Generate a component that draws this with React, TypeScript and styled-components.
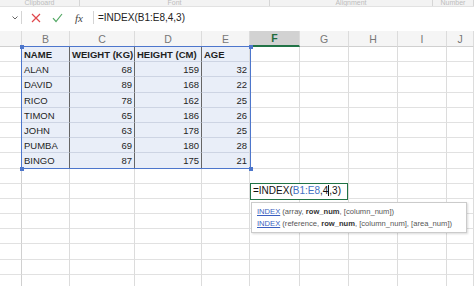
import React from "react";
import styled, { createGlobalStyle } from "styled-components";

const GlobalStyle = createGlobalStyle`
  html, body { margin: 0; padding: 0; background: #ffffff; }
  body {
    width: 474px;
    height: 286px;
    overflow: hidden;
    font-family: "Liberation Sans", Arial, sans-serif;
  }
`;

const COLS = ["B", "C", "D", "E", "F", "G", "H", "I", "J"];
const COL_W = [22, 48, 65, 67, 48, 50, 49, 49, 49];
const ROW_H = 15.2;
const HEAD_H = 16;

const data = [
  ["NAME", "WEIGHT (KG)", "HEIGHT (CM)", "AGE"],
  ["ALAN", "68", "159", "32"],
  ["DAVID", "89", "168", "22"],
  ["RICO", "78", "162", "25"],
  ["TIMON", "65", "186", "26"],
  ["JOHN", "63", "178", "25"],
  ["PUMBA", "69", "180", "28"],
  ["BINGO", "87", "175", "21"],
];

const Page = styled.div`
  width: 474px;
  height: 286px;
  overflow: hidden;
  display: flex;
  flex-direction: column;
`;

const Ribbon = styled.div`
  height: 7px;
  flex-shrink: 0;
  display: flex;
  background: #f3f3f3;
  border-bottom: 1px solid #e2e2e2;
  box-sizing: border-box;
  overflow: hidden;
`;

const RibbonGroup = styled.div<{ $w: number }>`
  width: ${(p) => p.$w}px;
  flex-shrink: 0;
  border-right: 1px solid #d6d6d6;
  display: flex;
  justify-content: center;
  align-items: flex-end;
  font-size: 7px;
  line-height: 7px;
  color: #bdbdbd;
  box-sizing: border-box;
  margin-top: -3px;
`;

const FormulaBar = styled.div`
  height: 21px;
  flex-shrink: 0;
  display: flex;
  align-items: center;
  background: #ffffff;
`;

const NameBox = styled.div`
  width: 22px;
  height: 13px;
  display: flex;
  align-items: center;
  justify-content: flex-end;
  padding-right: 3px;
  box-sizing: border-box;
  border-right: 1px solid #d4d4d4;
`;

const IconSlot = styled.div<{ $w: number }>`
  width: ${(p) => p.$w}px;
  display: flex;
  justify-content: center;
  align-items: center;
`;

const Fx = styled.span`
  font-family: "Liberation Serif", "Times New Roman", serif;
  font-style: italic;
  font-size: 11px;
  color: #444;
`;

const FormulaText = styled.div`
  flex: 1;
  height: 13px;
  border-left: 1px solid #d4d4d4;
  padding-left: 4px;
  font-size: 10px;
  line-height: 13px;
  color: #222;
`;

const Gap = styled.div`
  height: 3px;
  flex-shrink: 0;
  background: #ffffff;
`;

const Sheet = styled.div`
  position: relative;
  display: grid;
  grid-template-columns: ${COL_W.map((w) => w + "px").join(" ")} 1fr;
  grid-template-rows: ${HEAD_H}px;
  grid-auto-rows: ${ROW_H}px;
`;

const ColHead = styled.div<{ $active?: boolean }>`
  display: flex;
  align-items: center;
  justify-content: center;
  background: ${(p) => (p.$active ? "#d2d2d2" : "#f5f5f5")};
  border-right: 1px solid #dcdcdc;
  border-bottom: ${(p) => (p.$active ? "2px solid #217346" : "1px solid #d0d0d0")};
  box-sizing: border-box;
  font-size: 10.5px;
  color: ${(p) => (p.$active ? "#1e6b3c" : "#777777")};
  font-weight: ${(p) => (p.$active ? "bold" : "normal")};
`;

const RowHead = styled.div`
  background: #ffffff;
  border-right: 1px solid #d0d0d0;
  border-bottom: 1px solid #e1e1e1;
  box-sizing: border-box;
`;

const Cell = styled.div<{ $fill?: boolean; $right?: boolean; $bold?: boolean; $dark?: boolean }>`
  background: ${(p) => (p.$fill ? "#e9eef8" : "#ffffff")};
  border-right: 1px solid ${(p) => (p.$dark ? "#666666" : "#dcdcdc")};
  border-bottom: 1px solid ${(p) => (p.$fill ? "#cdd4e3" : "#e1e1e1")};
  box-sizing: border-box;
  padding: 0 2px;
  font-size: 9.5px;
  line-height: 15px;
  color: #1f1f1f;
  font-weight: ${(p) => (p.$bold ? "bold" : "normal")};
  text-align: ${(p) => (p.$right ? "right" : "left")};
  white-space: nowrap;
  overflow: hidden;
`;

const RangeBox = styled.div`
  position: absolute;
  left: 21px;
  top: ${HEAD_H - 1}px;
  width: 230px;
  height: ${8 * ROW_H + 1.5}px;
  border: 1.5px solid #4d76cc;
  box-sizing: border-box;
  pointer-events: none;
`;

const Handle = styled.div<{ $x: "l" | "r"; $y: "t" | "b" }>`
  position: absolute;
  width: 4px;
  height: 4px;
  background: #4d76cc;
  ${(p) => (p.$x === "l" ? "left: -2.5px;" : "right: -2.5px;")}
  ${(p) => (p.$y === "t" ? "top: -2.5px;" : "bottom: -2.5px;")}
`;

const Editor = styled.div`
  position: absolute;
  left: 250px;
  top: ${HEAD_H + 9 * ROW_H - 0.5}px;
  width: 98px;
  height: 16.5px;
  border: 1.5px solid #217346;
  box-sizing: border-box;
  background: #ffffff;
  padding-left: 2px;
  font-size: 10px;
  line-height: 13.5px;
  color: #111;
  white-space: nowrap;
`;

const RefText = styled.span`
  color: #4472c4;
`;

const Caret = styled.span`
  display: inline-block;
  width: 1px;
  height: 11px;
  background: #111;
  vertical-align: -2px;
`;

const Tooltip = styled.div`
  position: absolute;
  left: 251px;
  top: ${HEAD_H + 10 * ROW_H + 3}px;
  width: 216px;
  height: 31px;
  box-sizing: border-box;
  background: #ffffff;
  border: 1px solid #cbcbcb;
  box-shadow: 1px 1px 2px rgba(0, 0, 0, 0.15);
  padding: 3px 5px;
  display: flex;
  flex-direction: column;
  justify-content: center;
  gap: 3px;
  font-size: 7.6px;
  color: #555;
  white-space: nowrap;
`;

const Link = styled.span`
  color: #3b5fc0;
  text-decoration: underline;
`;

const Arg = styled.b`
  color: #333;
`;

const Chevron = () => (
  <svg width="6" height="4" viewBox="0 0 6 4">
    <path d="M0.5 0.5 L3 3 L5.5 0.5" fill="none" stroke="#666" strokeWidth="1" />
  </svg>
);

const CancelIcon = () => (
  <svg width="10" height="10" viewBox="0 0 10 10">
    <path d="M1 1 L9 9 M9 1 L1 9" stroke="#e0474c" strokeWidth="1.2" fill="none" />
  </svg>
);

const EnterIcon = () => (
  <svg width="11" height="10" viewBox="0 0 11 10">
    <path d="M1 5.2 L4 8.5 L10 1" stroke="#54a865" strokeWidth="1.2" fill="none" />
  </svg>
);

const App = () => {
  const rows = 16;
  return (
    <>
      <GlobalStyle />
      <Page>
        <Ribbon>
          <RibbonGroup $w={80}>Clipboard</RibbonGroup>
          <RibbonGroup $w={190}>Font</RibbonGroup>
          <RibbonGroup $w={163}>Alignment</RibbonGroup>
          <RibbonGroup $w={41}>Number</RibbonGroup>
        </Ribbon>
        <FormulaBar>
          <NameBox>
            <Chevron />
          </NameBox>
          <IconSlot $w={27}>
            <CancelIcon />
          </IconSlot>
          <IconSlot $w={16}>
            <EnterIcon />
          </IconSlot>
          <IconSlot $w={28}>
            <Fx>fx</Fx>
          </IconSlot>
          <FormulaText>=INDEX(B1:E8,4,3)</FormulaText>
        </FormulaBar>
        <Gap />
        <Sheet>
          <ColHead />
          {COLS.map((c) => (
            <ColHead key={c} $active={c === "F"}>
              {c}
            </ColHead>
          ))}
          {Array.from({ length: rows }).map((_, r) => (
            <React.Fragment key={r}>
              <RowHead />
              {COLS.map((c, ci) => {
                const inRange = r < 8 && ci < 4;
                const value = inRange ? data[r][ci] : "";
                return (
                  <Cell
                    key={c}
                    $fill={inRange}
                    $dark={inRange && ci < 3}
                    $bold={inRange && r === 0}
                    $right={inRange && r > 0 && ci > 0}
                  >
                    {value}
                  </Cell>
                );
              })}
            </React.Fragment>
          ))}
          <RangeBox>
            <Handle $x="l" $y="t" />
            <Handle $x="r" $y="t" />
            <Handle $x="l" $y="b" />
            <Handle $x="r" $y="b" />
          </RangeBox>
          <Editor>
            =INDEX(<RefText>B1:E8</RefText>,4<Caret />,3)
          </Editor>
          <Tooltip>
            <div>
              <Link>INDEX</Link> (array, <Arg>row_num</Arg>, [column_num])
            </div>
            <div>
              <Link>INDEX</Link> (reference, <Arg>row_num</Arg>, [column_num], [area_num])
            </div>
          </Tooltip>
        </Sheet>
      </Page>
    </>
  );
};

export default App;
